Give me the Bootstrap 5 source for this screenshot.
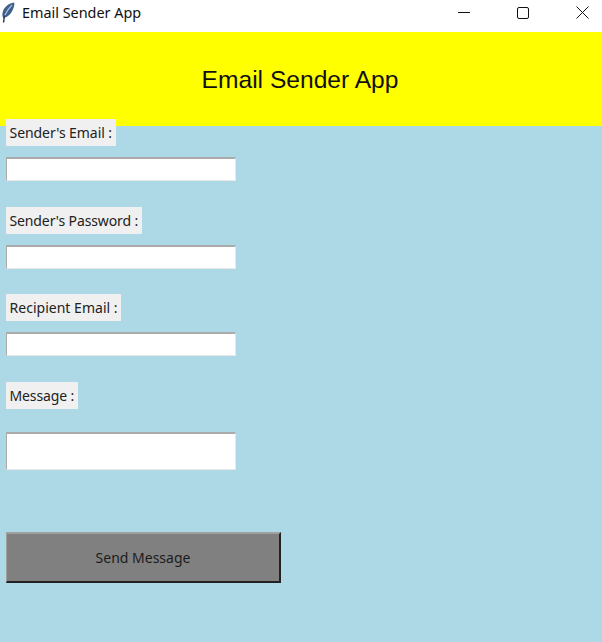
<!DOCTYPE html>
<html lang="en">
<head>
<meta charset="utf-8">
<title>Email Sender App</title>
<link href="https://cdn.jsdelivr.net/npm/bootstrap@5.3.0/dist/css/bootstrap.min.css" rel="stylesheet">
<style>
html,body{height:100%;margin:0}
body{background:#add8e6;font-family:"Noto Sans","Open Sans",sans-serif;color:#1c1c1c;overflow:hidden}
.win-bar{height:32px;background:#fff;font-size:14.4px;color:#111;padding-bottom:7px}
.win-title{margin-left:7px}
.win-icon{margin-left:2px}
.win-btns{gap:19px}
.win-btn{width:40px;height:24px;background:none;border:0;padding:0}
.app-head{height:94px;background:#ff0;font-family:"Liberation Sans",Arial,sans-serif;font-size:24.6px;color:#111;margin:0;padding-right:2px;padding-top:2px}
.form-area{margin-top:-7px;padding-left:6px;position:relative}
.fld-label{height:27px;background:#f0f0f0;padding:0 3.5px;font-size:14px;line-height:27px;letter-spacing:-.12px;white-space:nowrap;margin:0;color:#222}
.lbl-wide{letter-spacing:.02px}
.lbl-first{letter-spacing:-.06px}
.fld-input{display:block;width:230px;height:24px;background:#fff;border:0;border-top:2px solid #ababab;border-left:1px solid #ababab;border-right:1px solid #e8e8e8;border-bottom:1px solid #e8e8e8;padding:0 2px;border-radius:0;margin-top:11px;margin-bottom:25.5px}
.fld-msg{height:38px;margin-top:23.5px;margin-bottom:62px}
.send-btn{width:275px;height:51px;background:#808080;color:#1c1c1c;font-size:14px;border:0;border-top:2px solid #a0a0a0;border-left:1px solid #a0a0a0;border-right:2px solid #222;border-bottom:2px solid #222;border-radius:0;padding:0}
</style>
</head>
<body>
<div class="win-bar d-flex align-items-center justify-content-between">
  <div class="d-flex align-items-center">
    <svg class="win-icon" width="13" height="21" viewBox="0 0 13 21" aria-hidden="true">
      <path d="M12 .6C7 1.200 1.800 5.500.6 10.500c-.5 2.300-.2 4.300.8 5.500C6.500 15.500 10.500 10 12 4.500c.4-1.400.5-2.800 0-3.900z" fill="#3f5f8c"/>
      <path d="M10 3C7.500 5.500 4.500 9.500 3 13" stroke="#a9bdd6" stroke-width="1.300" fill="none"/>
      <path d="M2.300 14.500L1.600 20.500" stroke="#22304a" stroke-width="1.400" fill="none"/>
    </svg>
    <span class="win-title">Email Sender App</span>
  </div>
  <div class="win-btns d-flex">
    <button class="win-btn d-flex align-items-center justify-content-center" aria-label="Minimize"><svg width="12" height="12" viewBox="0 0 12 12"><path d="M0 5.500H12" stroke="#111" fill="none"/></svg></button>
    <button class="win-btn d-flex align-items-center justify-content-center" aria-label="Maximize"><svg width="12" height="12" viewBox="0 0 12 12"><rect x=".5" y=".5" width="11" height="11" rx="1.500" stroke="#111" fill="none"/></svg></button>
    <button class="win-btn d-flex align-items-center justify-content-center" aria-label="Close"><svg width="13" height="13" viewBox="0 0 13 13"><path d="M.5.5L12.500 12.500M12.500.5L.5 12.500" stroke="#111" fill="none"/></svg></button>
  </div>
</div>
<h1 class="app-head d-flex align-items-center justify-content-center fw-normal">Email Sender App</h1>
<form class="form-area d-flex flex-column align-items-start">
  <label class="fld-label lbl-first" for="f1">Sender's Email :</label>
  <input class="fld-input" id="f1" type="text">
  <label class="fld-label" for="f2">Sender's Password :</label>
  <input class="fld-input" id="f2" type="password">
  <label class="fld-label lbl-wide" for="f3">Recipient Email :</label>
  <input class="fld-input" id="f3" type="text">
  <label class="fld-label" for="f4">Message :</label>
  <input class="fld-input fld-msg" id="f4" type="text">
  <button class="send-btn btn" type="button">Send Message</button>
</form>
<script src="https://cdn.jsdelivr.net/npm/bootstrap@5.3.0/dist/js/bootstrap.bundle.min.js"></script>
</body>
</html>
